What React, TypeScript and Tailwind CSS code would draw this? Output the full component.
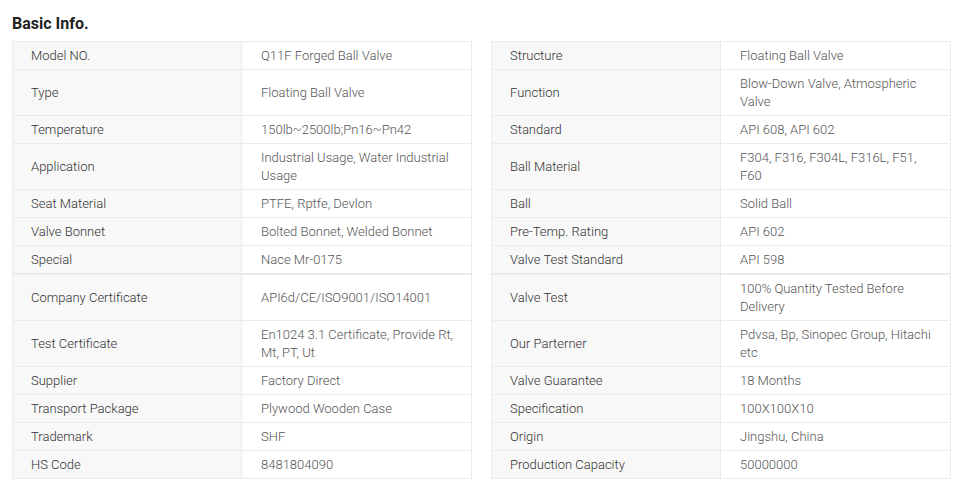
import React from "react";

// pairs of [label, value] for the left and right tables
const rows: [string, string, string, string][] = [
  ["Model NO.", "Q11F Forged Ball Valve", "Structure", "Floating Ball Valve"],
  ["Type", "Floating Ball Valve", "Function", "Blow-Down Valve, Atmospheric Valve"],
  ["Temperature", "150lb~2500lb;Pn16~Pn42", "Standard", "API 608, API 602"],
  ["Application", "Industrial Usage, Water Industrial Usage", "Ball Material", "F304, F316, F304L, F316L, F51, F60"],
  ["Seat Material", "PTFE, Rptfe, Devlon", "Ball", "Solid Ball"],
  ["Valve Bonnet", "Bolted Bonnet, Welded Bonnet", "Pre-Temp. Rating", "API 602"],
  ["Special", "Nace Mr-0175", "Valve Test Standard", "API 598"],
  ["Company Certificate", "API6d/CE/ISO9001/ISO14001", "Valve Test", "100% Quantity Tested Before Delivery"],
  ["Test Certificate", "En1024 3.1 Certificate, Provide Rt, Mt, PT, Ut", "Our Parterner", "Pdvsa, Bp, Sinopec Group, Hitachi etc"],
  ["Supplier", "Factory Direct", "Valve Guarantee", "18 Months"],
  ["Transport Package", "Plywood Wooden Case", "Specification", "100X100X10"],
  ["Trademark", "SHF", "Origin", "Jingshu, China"],
  ["HS Code", "8481804090", "Production Capacity", "50000000"],
];

const Cell = ({ label, value, first, thick }: { label: string; value: string; first: boolean; thick: boolean }) => (
  <div className={"flex border-x border-b border-[#ebebeb] " + (first || thick ? "border-t " : "")}>
    <div className="w-1/2 shrink-0 flex items-center bg-[#f8f8f8] border-r border-[#ebebeb] pl-[18px] pr-3 pt-[5px] pb-[4px] text-[#333]">
      {label}
    </div>
    <div className="w-1/2 flex items-center pl-[19px] pr-[16px] pt-[5px] pb-[4px] text-[#555]">{value}</div>
  </div>
);

export default function App() {
  return (
    <div
      className="bg-white pl-3 pr-[18px] pt-[13px] text-[13px] leading-[18px] font-light"
      style={{ fontFamily: "Roboto, 'Liberation Sans', sans-serif" }}
    >
      <h2 className="text-[16px] font-bold text-[#222] leading-[22px] mb-[6px]">Basic Info.</h2>
      <div className="flex flex-col">
        {rows.map((r, i) => (
          <div key={r[0]} className="grid grid-cols-2 gap-x-[19px]">
            <Cell label={r[0]} value={r[1]} first={i === 0} thick={i === 7} />
            <Cell label={r[2]} value={r[3]} first={i === 0} thick={i === 7} />
          </div>
        ))}
      </div>
    </div>
  );
}
